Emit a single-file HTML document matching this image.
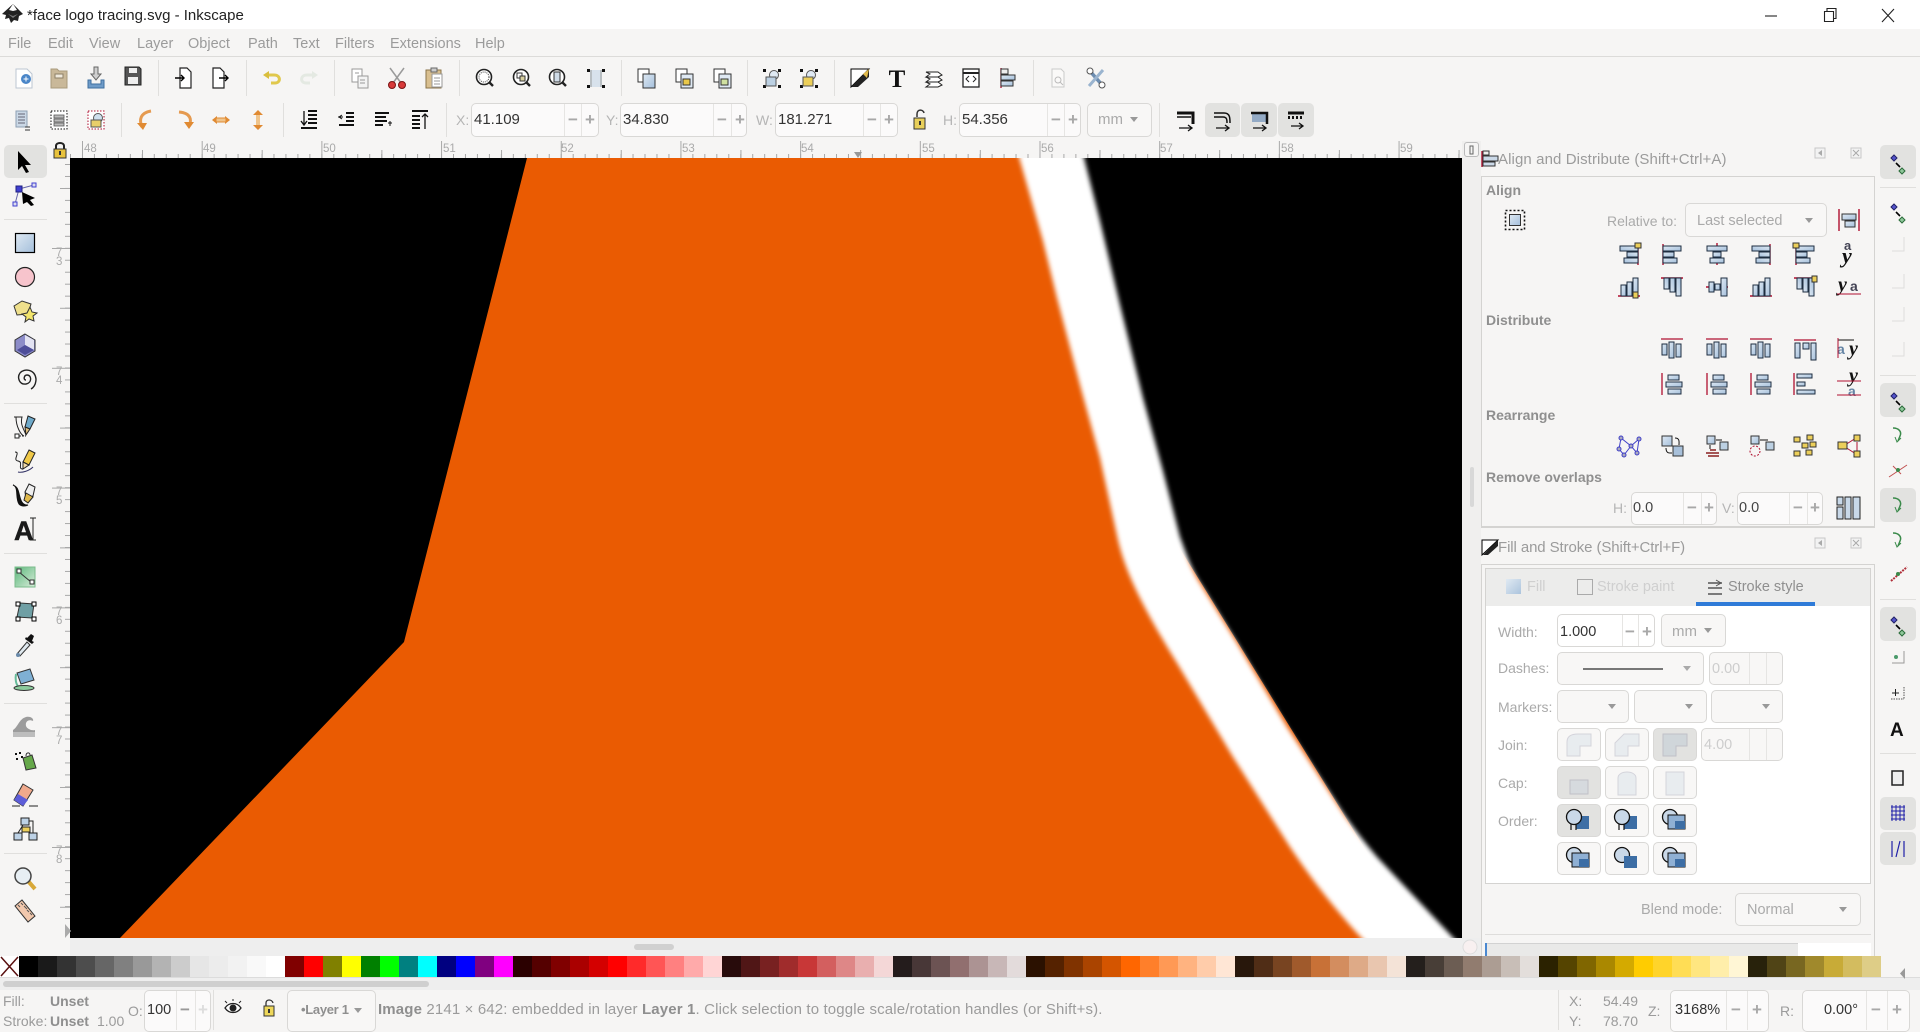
<!DOCTYPE html>
<html><head><meta charset="utf-8"><title>face logo tracing.svg - Inkscape</title>
<style>
html,body{margin:0;padding:0;width:1920px;height:1030px;overflow:hidden;background:#f6f5f4;font-family:"Liberation Sans",sans-serif;font-size:14px;color:#9b9b9b}
div,span.t{position:absolute}
.t{line-height:20px;height:20px;white-space:nowrap}
.b{font-weight:bold;color:#8f8f8f}
.d{color:#333;font-size:15px}
.m{font-size:14.5px;top:34px}
.pm{font-size:17px;font-weight:bold;color:#a8a8a8}
.rl{font-size:11.5px;color:#aaa;line-height:16px;top:141px}
.vl{font-size:11.5px;color:#aaa;line-height:9px;height:20px;white-space:normal;width:8px;left:56px}
.bx{background:#f8f7f6;border:1px solid #d9d8d6;border-radius:5px;box-sizing:border-box}
.on{background:#e2e2e0;border-radius:5px}
.sp{background:#fbfafa;border:1px solid #d9d8d6;border-radius:5px;box-sizing:border-box}
.v{width:1px;background:#e6e5e3}
.sep{background:#e0dfdd}
#pal{position:absolute;left:19px;top:956px;height:21px;width:1864px;display:flex;overflow:hidden}
#pal i{display:block;flex:0 0 19px;height:21px}
</style></head><body>

<div style="left:0;top:0;width:1920px;height:29px;background:#fff"></div>
<span class="t" style="left:27px;top:6px;font-size:15px;color:#222">*face logo tracing.svg - Inkscape</span>

<div style="left:0;top:56px;width:1920px;height:1px;background:#dcdbd9"></div>
<span class="t m" style="left:8px">File</span>
<span class="t m" style="left:48px">Edit</span>
<span class="t m" style="left:89px">View</span>
<span class="t m" style="left:137px">Layer</span>
<span class="t m" style="left:188px">Object</span>
<span class="t m" style="left:248px">Path</span>
<span class="t m" style="left:293px">Text</span>
<span class="t m" style="left:335px">Filters</span>
<span class="t m" style="left:390px">Extensions</span>
<span class="t m" style="left:475px">Help</span>

<!-- toolbar separators -->
<div class="sep" style="left:158px;top:60px;width:1px;height:36px"></div>
<div class="sep" style="left:246px;top:60px;width:1px;height:36px"></div>
<div class="sep" style="left:334px;top:60px;width:1px;height:36px"></div>
<div class="sep" style="left:459px;top:60px;width:1px;height:36px"></div>
<div class="sep" style="left:621px;top:60px;width:1px;height:36px"></div>
<div class="sep" style="left:747px;top:60px;width:1px;height:36px"></div>
<div class="sep" style="left:834px;top:60px;width:1px;height:36px"></div>
<div class="sep" style="left:1033px;top:60px;width:1px;height:36px"></div>
<div class="sep" style="left:121px;top:103px;width:1px;height:34px"></div>
<div class="sep" style="left:283px;top:103px;width:1px;height:34px"></div>
<div class="sep" style="left:446px;top:103px;width:1px;height:34px"></div>
<div class="sep" style="left:1159px;top:103px;width:1px;height:34px"></div>

<!-- toolbar 2 spins -->
<span class="t" style="left:456px;top:110px;font-size:14px;color:#b5b5b5">X:</span>
<div class="sp" style="left:471px;top:103px;width:128px;height:34px"></div>
<div class="v" style="left:564px;top:104px;height:32px"></div><div class="v" style="left:581px;top:104px;height:32px"></div>
<span class="t d" style="left:474px;top:110px">41.109</span>
<span class="t pm" style="left:568px;top:110px">−</span><span class="t pm" style="left:585px;top:110px">+</span>

<span class="t" style="left:606px;top:110px;color:#b5b5b5">Y:</span>
<div class="sp" style="left:620px;top:103px;width:127px;height:34px"></div>
<div class="v" style="left:713px;top:104px;height:32px"></div><div class="v" style="left:731px;top:104px;height:32px"></div>
<span class="t d" style="left:623px;top:110px">34.830</span>
<span class="t pm" style="left:717px;top:110px">−</span><span class="t pm" style="left:735px;top:110px">+</span>

<span class="t" style="left:756px;top:110px;color:#b5b5b5">W:</span>
<div class="sp" style="left:775px;top:103px;width:123px;height:34px"></div>
<div class="v" style="left:863px;top:104px;height:32px"></div><div class="v" style="left:880px;top:104px;height:32px"></div>
<span class="t d" style="left:778px;top:110px">181.271</span>
<span class="t pm" style="left:867px;top:110px">−</span><span class="t pm" style="left:884px;top:110px">+</span>

<span class="t" style="left:943px;top:110px;color:#b5b5b5">H:</span>
<div class="sp" style="left:959px;top:103px;width:122px;height:34px"></div>
<div class="v" style="left:1047px;top:104px;height:32px"></div><div class="v" style="left:1064px;top:104px;height:32px"></div>
<span class="t d" style="left:962px;top:110px">54.356</span>
<span class="t pm" style="left:1051px;top:110px">−</span><span class="t pm" style="left:1068px;top:110px">+</span>

<div class="bx" style="left:1087px;top:103px;width:65px;height:34px"></div>
<span class="t" style="left:1098px;top:110px;font-size:15px;color:#aaa">mm</span>

<div class="on" style="left:1205px;top:103px;width:35px;height:34px"></div>
<div class="on" style="left:1241px;top:103px;width:36px;height:34px"></div>
<div class="on" style="left:1278px;top:103px;width:36px;height:34px"></div>

<!-- top ruler -->
<div style="left:70px;top:141px;width:1392px;height:17px;background-image:linear-gradient(90deg,#a8a8a8 1px,transparent 1px),linear-gradient(90deg,#a8a8a8 1px,transparent 1px),linear-gradient(90deg,#a8a8a8 1px,transparent 1px);background-size:119.7px 17px,119.7px 8px,11.97px 4px;background-position:12px 0,72px 100%,0 100%;background-repeat:repeat-x"></div>
<span class="t rl" style="left:84px">48</span>
<span class="t rl" style="left:203px">49</span>
<span class="t rl" style="left:323px">50</span>
<span class="t rl" style="left:443px">51</span>
<span class="t rl" style="left:561px">52</span>
<span class="t rl" style="left:682px">53</span>
<span class="t rl" style="left:801px">54</span>
<span class="t rl" style="left:922px">55</span>
<span class="t rl" style="left:1041px">56</span>
<span class="t rl" style="left:1160px">57</span>
<span class="t rl" style="left:1281px">58</span>
<span class="t rl" style="left:1400px">59</span>

<!-- left ruler -->
<div style="left:52px;top:159px;width:18px;height:779px;background-image:linear-gradient(#a8a8a8 1px,transparent 1px),linear-gradient(#a8a8a8 1px,transparent 1px),linear-gradient(#a8a8a8 1px,transparent 1px);background-size:18px 119.8px,10px 119.8px,5px 11.98px;background-position:0 89px,100% 29px,100% 5px;background-repeat:repeat-y"></div>
<span class="t vl" style="top:249px">7<br>3</span>
<span class="t vl" style="top:368px">7<br>4</span>
<span class="t vl" style="top:488px">7<br>5</span>
<span class="t vl" style="top:608px">7<br>6</span>
<span class="t vl" style="top:728px">7<br>7</span>
<span class="t vl" style="top:847px">7<br>8</span>

<!-- left tool seps and active -->
<div class="on" style="left:4px;top:145px;width:43px;height:33px"></div>
<div class="sep" style="left:4px;top:219px;width:43px;height:1px"></div>
<div class="sep" style="left:4px;top:403px;width:43px;height:1px"></div>
<div class="sep" style="left:4px;top:553px;width:43px;height:1px"></div>
<div class="sep" style="left:4px;top:703px;width:43px;height:1px"></div>
<div class="sep" style="left:4px;top:853px;width:43px;height:1px"></div>

<!-- canvas -->
<svg style="position:absolute;left:70px;top:158px" width="1392" height="780" viewBox="70 158 1392 780">
<defs><filter id="bl" x="-5%" y="-5%" width="110%" height="110%"><feGaussianBlur stdDeviation="2.5"/></filter></defs>
<rect x="70" y="158" width="1392" height="780" fill="#000"/>
<path d="M527 158L404 642L120 938H1420L1150 500L1060 158Z" fill="#ea5b02"/>
<path d="M1017 150L1043 241L1057 298L1080 385L1100 458L1118 540C1124 565 1135 595 1177 663L1233 757L1290 847C1310 877 1335 910 1368 945H1460L1377 857C1365 843 1355 830 1343 813L1287 727L1237 643L1200 583C1190 567 1185 550 1180 537L1163 471L1143 398L1120 305L1100 221L1082 150Z" fill="#fff" filter="url(#bl)"/>
</svg>

<!-- bottom strip -->
<div style="left:70px;top:938px;width:1411px;height:18px;background:#eeeeee"></div>
<div style="left:634px;top:944px;width:40px;height:6px;background:#d0d0d0;border-radius:3px"></div>
<div style="left:0;top:977px;width:1920px;height:13px;background:#eeeeee;border-top:1px solid #dcdcdc;box-sizing:border-box"></div>
<div style="left:3px;top:981px;width:426px;height:6px;background:#cfcfcf;border-radius:3px"></div>

<!-- gutter right of canvas -->
<div style="left:1462px;top:141px;width:19px;height:797px;background:#f0efee"></div>
<div style="left:1470px;top:467px;width:4px;height:40px;background:#d8d8d8;border-radius:2px"></div>
<div style="left:1464px;top:142px;width:15px;height:15px;border:1px solid #bbb;border-radius:3px;box-sizing:border-box;background:#f6f5f4"></div>

<!-- Align panel -->
<span class="t" style="left:1498px;top:150px;font-size:15px;letter-spacing:.1px">Align and Distribute (Shift+Ctrl+A)</span>
<div style="left:1481px;top:176px;width:394px;height:352px;border:1px solid #d4d3d1;box-sizing:border-box;border-bottom-width:2px"></div>
<span class="t b" style="left:1486px;top:180px;font-size:14px">Align</span>
<span class="t b" style="left:1486px;top:310px;font-size:14px">Distribute</span>
<span class="t b" style="left:1486px;top:405px;font-size:14px">Rearrange</span>
<span class="t b" style="left:1486px;top:467px;font-size:14px">Remove overlaps</span>
<span class="t" style="left:1607px;top:211px;font-size:14px;color:#aaa">Relative to:</span>
<div class="bx" style="left:1685px;top:203px;width:142px;height:34px"></div>
<span class="t" style="left:1697px;top:211px;font-size:14.5px;color:#aaa">Last selected</span>

<span class="t" style="left:1613px;top:498px;color:#b5b5b5">H:</span>
<div class="sp" style="left:1631px;top:492px;width:86px;height:33px"></div>
<div class="v" style="left:1683px;top:493px;height:31px"></div><div class="v" style="left:1701px;top:493px;height:31px"></div>
<span class="t" style="left:1633px;top:498px;font-size:14.5px;color:#444">0.0</span>
<span class="t pm" style="left:1687px;top:498px">−</span><span class="t pm" style="left:1704px;top:498px">+</span>
<span class="t" style="left:1722px;top:498px;color:#b5b5b5">V:</span>
<div class="sp" style="left:1737px;top:492px;width:86px;height:33px"></div>
<div class="v" style="left:1789px;top:493px;height:31px"></div><div class="v" style="left:1807px;top:493px;height:31px"></div>
<span class="t" style="left:1739px;top:498px;font-size:14.5px;color:#444">0.0</span>
<span class="t pm" style="left:1793px;top:498px">−</span><span class="t pm" style="left:1810px;top:498px">+</span>

<!-- Fill & Stroke panel -->
<span class="t" style="left:1498px;top:538px;font-size:15px;letter-spacing:-.1px">Fill and Stroke (Shift+Ctrl+F)</span>
<div style="left:1481px;top:564px;width:394px;height:410px;border:1px solid #d4d3d1;border-bottom:0;box-sizing:border-box"></div>
<div style="left:1485px;top:568px;width:386px;height:316px;border:1px solid #d4d3d1;box-sizing:border-box;background:#fff"></div>
<div style="left:1486px;top:569px;width:384px;height:37px;background:#ececeb"></div>
<div style="left:1696px;top:602px;width:119px;height:4px;background:#2f7bd8"></div>
<span class="t" style="left:1527px;top:577px;font-size:14.5px;color:#cfcfcf">Fill</span>
<span class="t" style="left:1597px;top:577px;font-size:14.5px;color:#cfcfcf">Stroke paint</span>
<span class="t" style="left:1728px;top:577px;font-size:14.5px;color:#8f8f8f">Stroke style</span>

<span class="t" style="left:1498px;top:622px;color:#aaa">Width:</span>
<div class="sp" style="left:1557px;top:614px;width:98px;height:33px;background:#fff"></div>
<div class="v" style="left:1622px;top:615px;height:31px"></div><div class="v" style="left:1638px;top:615px;height:31px"></div>
<span class="t" style="left:1560px;top:622px;font-size:14.5px;color:#333">1.000</span>
<span class="t pm" style="left:1625px;top:622px">−</span><span class="t pm" style="left:1642px;top:622px">+</span>
<div class="bx" style="left:1661px;top:614px;width:65px;height:33px"></div>
<span class="t" style="left:1672px;top:622px;font-size:15px;color:#aaa">mm</span>

<span class="t" style="left:1498px;top:658px;color:#aaa">Dashes:</span>
<div class="bx" style="left:1557px;top:652px;width:147px;height:33px"></div>
<div style="left:1583px;top:668px;width:80px;height:2px;background:#777"></div>
<div class="bx" style="left:1709px;top:652px;width:74px;height:33px"></div>
<div class="v" style="left:1749px;top:653px;height:31px"></div><div class="v" style="left:1766px;top:653px;height:31px"></div>
<span class="t" style="left:1712px;top:659px;font-size:14.5px;color:#cdcdcd">0.00</span>

<span class="t" style="left:1498px;top:697px;color:#aaa">Markers:</span>
<div class="bx" style="left:1557px;top:690px;width:72px;height:33px"></div>
<div class="bx" style="left:1634px;top:690px;width:73px;height:33px"></div>
<div class="bx" style="left:1711px;top:690px;width:72px;height:33px"></div>

<span class="t" style="left:1498px;top:735px;color:#aaa">Join:</span>
<div class="bx" style="left:1557px;top:728px;width:44px;height:33px"></div>
<div class="bx" style="left:1605px;top:728px;width:44px;height:33px"></div>
<div class="bx" style="left:1653px;top:728px;width:44px;height:33px;background:#e2e2e0"></div>
<div class="bx" style="left:1701px;top:728px;width:82px;height:33px"></div>
<div class="v" style="left:1749px;top:729px;height:31px"></div><div class="v" style="left:1766px;top:729px;height:31px"></div>
<span class="t" style="left:1704px;top:735px;font-size:14.5px;color:#cdcdcd">4.00</span>

<span class="t" style="left:1498px;top:773px;color:#aaa">Cap:</span>
<div class="bx" style="left:1557px;top:766px;width:44px;height:33px;background:#e2e2e0"></div>
<div class="bx" style="left:1605px;top:766px;width:44px;height:33px"></div>
<div class="bx" style="left:1653px;top:766px;width:44px;height:33px"></div>

<span class="t" style="left:1498px;top:811px;color:#aaa">Order:</span>
<div class="bx" style="left:1557px;top:804px;width:44px;height:33px;background:#e2e2e0"></div>
<div class="bx" style="left:1605px;top:804px;width:44px;height:33px"></div>
<div class="bx" style="left:1653px;top:804px;width:44px;height:33px"></div>
<div class="bx" style="left:1557px;top:842px;width:44px;height:33px"></div>
<div class="bx" style="left:1605px;top:842px;width:44px;height:33px"></div>
<div class="bx" style="left:1653px;top:842px;width:44px;height:33px"></div>

<span class="t" style="left:1641px;top:900px;font-size:14.5px;color:#aaa">Blend mode:</span>
<div class="bx" style="left:1735px;top:893px;width:126px;height:33px"></div>
<span class="t" style="left:1747px;top:900px;font-size:14.5px;color:#aaa">Normal</span>
<div style="left:1485px;top:934px;width:386px;height:1px;background:#dedddb"></div>
<div style="left:1485px;top:943px;width:313px;height:13px;background:#e9e9e8;border-top:1px solid #d2d2d2;box-sizing:border-box"></div>
<div style="left:1485px;top:943px;width:2px;height:13px;background:#4a88d0"></div>
<div style="left:1798px;top:943px;width:73px;height:13px;background:#fff"></div>

<!-- palette -->
<div style="left:0;top:956px;width:19px;height:21px;background:#fff"></div>
<div id="pal"><i style="background:#000"></i><i style="background:#1a1a1a"></i><i style="background:#333"></i><i style="background:#4d4d4d"></i><i style="background:#666"></i><i style="background:#808080"></i><i style="background:#999"></i><i style="background:#b3b3b3"></i><i style="background:#ccc"></i><i style="background:#e6e6e6"></i><i style="background:#ececec"></i><i style="background:#f2f2f2"></i><i style="background:#f9f9f9"></i><i style="background:#fff"></i><i style="background:#800000"></i><i style="background:#f00"></i><i style="background:#808000"></i><i style="background:#ff0"></i><i style="background:#008000"></i><i style="background:#0f0"></i><i style="background:#008080"></i><i style="background:#0ff"></i><i style="background:#000080"></i><i style="background:#00f"></i><i style="background:#800080"></i><i style="background:#f0f"></i><i style="background:#2b0000"></i><i style="background:#500"></i><i style="background:#800000"></i><i style="background:#a00"></i><i style="background:#d40000"></i><i style="background:#f00"></i><i style="background:#ff2a2a"></i><i style="background:#f55"></i><i style="background:#ff8080"></i><i style="background:#faa"></i><i style="background:#ffd5d5"></i><i style="background:#280b0b"></i><i style="background:#501616"></i><i style="background:#782121"></i><i style="background:#a02c2c"></i><i style="background:#c83737"></i><i style="background:#d35f5f"></i><i style="background:#de8787"></i><i style="background:#e9afaf"></i><i style="background:#f4d7d7"></i><i style="background:#241c1c"></i><i style="background:#483737"></i><i style="background:#6c5353"></i><i style="background:#916f6f"></i><i style="background:#ac9393"></i><i style="background:#c8b7b7"></i><i style="background:#e3dbdb"></i><i style="background:#2b1100"></i><i style="background:#520"></i><i style="background:#803300"></i><i style="background:#a40"></i><i style="background:#d45500"></i><i style="background:#f60"></i><i style="background:#ff7f2a"></i><i style="background:#f95"></i><i style="background:#ffb380"></i><i style="background:#fca"></i><i style="background:#ffe6d5"></i><i style="background:#28170b"></i><i style="background:#502d16"></i><i style="background:#784421"></i><i style="background:#a05a2c"></i><i style="background:#c87137"></i><i style="background:#d38d5f"></i><i style="background:#deaa87"></i><i style="background:#e9c6af"></i><i style="background:#f4e3d7"></i><i style="background:#241f1c"></i><i style="background:#483e37"></i><i style="background:#6c5d53"></i><i style="background:#917c6f"></i><i style="background:#ac9d93"></i><i style="background:#c8beb7"></i><i style="background:#e3dedb"></i><i style="background:#2b2200"></i><i style="background:#540"></i><i style="background:#806600"></i><i style="background:#a80"></i><i style="background:#d4aa00"></i><i style="background:#fc0"></i><i style="background:#ffd42a"></i><i style="background:#fd5"></i><i style="background:#ffe680"></i><i style="background:#fea"></i><i style="background:#fff6d5"></i><i style="background:#28220b"></i><i style="background:#504416"></i><i style="background:#786721"></i><i style="background:#a0892c"></i><i style="background:#c8ab37"></i><i style="background:#d3bc5f"></i><i style="background:#decd87"></i></div>

<!-- status bar -->
<span class="t" style="left:3px;top:991px;font-size:14px">Fill:</span>
<span class="t b" style="left:50px;top:991px;font-size:14px">Unset</span>
<span class="t" style="left:3px;top:1011px;font-size:14px">Stroke:</span>
<span class="t b" style="left:50px;top:1011px;font-size:14px">Unset</span>
<span class="t" style="left:97px;top:1011px;font-size:14px">1.00</span>
<span class="t" style="left:128px;top:1001px;font-size:14px">O:</span>
<div class="sp" style="left:144px;top:990px;width:67px;height:42px"></div>
<div class="v" style="left:176px;top:991px;height:39px"></div><div class="v" style="left:195px;top:991px;height:39px"></div>
<span class="t" style="left:147px;top:1000px;font-size:14.5px;color:#333">100</span>
<span class="t pm" style="left:180px;top:1000px;color:#999">−</span><span class="t pm" style="left:198px;top:1000px;color:#ddd">+</span>
<div class="sep" style="left:213px;top:990px;width:1px;height:40px"></div>
<div class="bx" style="left:287px;top:990px;width:89px;height:42px"></div>
<span class="t b" style="left:301px;top:1000px;font-size:13px;letter-spacing:-.3px">•Layer 1</span>
<span class="t" style="left:378px;top:1000px;font-size:15px;letter-spacing:.14px"><b style="color:#8f8f8f">Image</b> 2141 × 642: embedded in layer <b style="color:#8f8f8f">Layer 1</b>. Click selection to toggle scale/rotation handles (or Shift+s).</span>
<div class="sep" style="left:1558px;top:990px;width:1px;height:40px"></div>
<span class="t" style="left:1569px;top:991px">X:</span><span class="t" style="left:1600px;top:991px;width:38px;text-align:right;font-size:14px">54.49</span>
<span class="t" style="left:1569px;top:1011px">Y:</span><span class="t" style="left:1600px;top:1011px;width:38px;text-align:right;font-size:14px">78.70</span>
<span class="t" style="left:1648px;top:1001px">Z:</span>
<div class="sp" style="left:1670px;top:990px;width:99px;height:42px"></div>
<div class="v" style="left:1726px;top:991px;height:39px"></div><div class="v" style="left:1747px;top:991px;height:39px"></div>
<span class="t" style="left:1675px;top:1000px;font-size:14.5px;color:#333">3168%</span>
<span class="t pm" style="left:1731px;top:1000px">−</span><span class="t pm" style="left:1752px;top:1000px">+</span>
<span class="t" style="left:1780px;top:1001px">R:</span>
<div class="sp" style="left:1802px;top:990px;width:108px;height:42px"></div>
<div class="v" style="left:1866px;top:991px;height:39px"></div><div class="v" style="left:1887px;top:991px;height:39px"></div>
<span class="t" style="left:1820px;top:1000px;width:38px;text-align:right;font-size:14.5px;color:#333">0.00°</span>
<span class="t pm" style="left:1871px;top:1000px">−</span><span class="t pm" style="left:1892px;top:1000px">+</span>

<!-- snap bar actives -->
<div class="on" style="left:1880px;top:145px;width:36px;height:34px"></div>
<div class="sep" style="left:1880px;top:187px;width:36px;height:1px"></div>
<div class="sep" style="left:1880px;top:375px;width:36px;height:1px"></div>
<div class="on" style="left:1880px;top:383px;width:36px;height:34px"></div>
<div class="on" style="left:1880px;top:488px;width:36px;height:34px"></div>
<div class="sep" style="left:1880px;top:599px;width:36px;height:1px"></div>
<div class="on" style="left:1880px;top:607px;width:36px;height:34px"></div>
<div class="sep" style="left:1880px;top:753px;width:36px;height:1px"></div>
<div class="on" style="left:1880px;top:797px;width:36px;height:33px"></div>
<div class="on" style="left:1880px;top:832px;width:36px;height:33px"></div>

<!-- icon overlay -->
<svg style="position:absolute;left:0;top:0" width="1920" height="1030" viewBox="0 0 1920 1030" fill="none">
<defs>
<linearGradient id="gb" x1="0" y1="0" x2="1" y2="1"><stop offset="0" stop-color="#dfe9f3"/><stop offset="1" stop-color="#a4bfdb"/></linearGradient>
<linearGradient id="gg" x1="0" y1="0" x2="1" y2="1"><stop offset="0" stop-color="#5cb87c"/><stop offset="1" stop-color="#d8ecd9"/></linearGradient>
<g id="mg"><circle cx="-1" cy="-1" r="7.5" fill="#fff" stroke="#222" stroke-width="1.6"/><path d="M4 4l4 4" stroke="#222" stroke-width="2.4"/></g>
<g id="arr"><path d="M-4-2h8l-4 5z" fill="#999"/></g>
<g id="arl"><path d="M-4-2h8l-4 5z" fill="#aaa"/></g>
<g id="hb"><path d="M-9-10V11" stroke="#b01030" stroke-width="1.4"/><rect x="-9" y="-8" width="18" height="5" fill="url(#gb)" stroke="#1d2d40"/><rect x="-9" y="-2" width="11" height="5" fill="url(#gb)" stroke="#1d2d40"/><rect x="-9" y="4" width="14" height="5" fill="url(#gb)" stroke="#1d2d40"/></g>
<g id="vb"><path d="M-11 9H11" stroke="#b01030" stroke-width="1.4"/><rect x="-8" y="-2" width="5" height="11" fill="url(#gb)" stroke="#1d2d40"/><rect x="-2" y="-5" width="5" height="14" fill="url(#gb)" stroke="#1d2d40"/><rect x="4" y="-9" width="5" height="18" fill="url(#gb)" stroke="#1d2d40"/></g>
<g id="dv"><path d="M-11-10H11" stroke="#b01030" stroke-width="1.3"/><rect x="-10" y="-5" width="5" height="11" fill="url(#gb)" stroke="#1d2d40"/><rect x="-3" y="-7" width="5" height="16" fill="url(#gb)" stroke="#1d2d40"/><rect x="4" y="-5" width="5" height="13" fill="url(#gb)" stroke="#1d2d40"/></g>
<g id="dh"><path d="M-10-11V11" stroke="#b01030" stroke-width="1.3"/><rect x="-4" y="-9" width="11" height="5" fill="url(#gb)" stroke="#1d2d40"/><rect x="-6" y="-2" width="16" height="5" fill="url(#gb)" stroke="#1d2d40"/><rect x="-4" y="5" width="13" height="5" fill="url(#gb)" stroke="#1d2d40"/></g>
<g id="sn"><path d="M-7-10l3-3 3 3-3 3z" fill="#5555cc" stroke="#222266"/><path d="M1 3l3-3 3 3-3 3z" fill="#8fc79a" stroke="#2a6b3a"/><path d="M-2-5l4 4" stroke="#000" stroke-width="1.6"/></g>
<g id="snp" opacity=".22"><path d="M6-8V6H-6" stroke="#888"/></g>
<g id="cv"><path d="M-5-7c6 0 9 4 7 8l-2 5" stroke="#3a8a4a" stroke-width="1.5"/><path d="M3 3l-4 4-2-5" stroke="#3a8a4a"/></g>
<g id="ord"><rect x="-2" y="-5" width="13" height="13" fill="#3d6ea5"/><circle cx="-4" cy="-4" r="7.5" fill="#c9d8e8" stroke="#111" stroke-width="1.3"/><path d="M-7 3v6M-2 3v6" stroke="#111" stroke-width="1.2"/></g>
<g id="ord2"><circle cx="-4" cy="-4" r="7.5" fill="#c9d8e8" stroke="#111" stroke-width="1.3"/><rect x="-6" y="-6" width="17" height="14" fill="#8fb0d4" stroke="#111"/><rect x="1" y="0" width="10" height="8" fill="#3d6ea5"/></g>
</defs>

<!-- title logo -->
<path d="M13 4L2 14l4 1-1 4 4-1 2 5 3-3 4 1 1-5 4-2z" fill="#222"/><path d="M13 4l-4 6 4 1 4-1z" fill="#fff"/><path d="M8 14l5 4 5-4-5 2z" fill="#777"/>
<!-- window controls -->
<path d="M1765 16h12" stroke="#222" stroke-width="1.1"/>
<path d="M1824.500 11.500h9v10h-9z" stroke="#222" stroke-width="1.1" fill="#fff"/><path d="M1827 11.500v-3h9v10h-2.500" stroke="#222" stroke-width="1.1"/>
<path d="M1882 9l12 13M1894 9l-12 13" stroke="#222" stroke-width="1.1"/>

<!-- toolbar 1 -->
<g transform="translate(24,78)"><path d="M-8-9H3l5 5V10H-8z" fill="#fff" stroke="#bcc6d2"/><circle cx="2" cy="1" r="5" fill="#4a86c8"/><path d="M-.5 1h5M2-1.500v5" stroke="#fff"/></g>
<g transform="translate(59,78)"><path d="M-8-9h6l2 2H8V10H-8z" fill="#c9b899" stroke="#a99a7c"/><rect x="-4" y="-4" width="8" height="4" fill="#efe9dc" stroke="#8d8066"/></g>
<g transform="translate(96,78)"><path d="M-8 2h3v4H5V2h3v8H-8z" fill="#6e9bc8" stroke="#3f6f9f"/><path d="M-2-11h4v7h3l-5 6-5-6h3z" fill="#cfcfcf" stroke="#666"/></g>
<g transform="translate(133,76)"><path d="M-8-9H6l2 2V9H-8z" fill="#555" stroke="#222"/><rect x="-4" y="-8" width="8" height="5" fill="#eee"/><rect x="-5" y="1" width="10" height="7" fill="#eee"/></g>
<g transform="translate(184,78)"><path d="M-4-10H3l4 4V10H-4z" fill="#fff" stroke="#222" stroke-width="1.2"/><path d="M-9 0H0M-3-3l3 3-3 3" stroke="#000" stroke-width="1.4"/></g>
<g transform="translate(220,78)"><path d="M-7-10H0l4 4V10H-7z" fill="#fff" stroke="#222" stroke-width="1.2"/><path d="M-1 0H8M5-3l3 3-3 3" stroke="#000" stroke-width="1.4"/></g>
<g transform="translate(272,78)"><path d="M-6-3H2c7 0 7 8 1 8H-1" stroke="#e0c84c" stroke-width="3"/><path d="M-9-3l6-4V1z" fill="#d9be3c"/></g>
<g transform="translate(309,78)" opacity=".3"><path d="M6-3H-2c-7 0-7 8-1 8H1" stroke="#bcd0bc" stroke-width="3"/><path d="M9-3L3-7V1z" fill="#bcd0bc"/></g>
<g transform="translate(360,78)"><path d="M-8-9H2V4H-8z" fill="#fff" stroke="#999"/><path d="M-2-2H8V10H-2z" fill="#f3f3f3" stroke="#999"/><path d="M-5-5h4M0 2h5M0 5h5" stroke="#999"/></g>
<g transform="translate(397,78)"><path d="M-7-10L4 5M7-10L-4 5" stroke="#9a9a9a" stroke-width="1.500"/><circle cx="-5" cy="7" r="3.500" fill="#d83a3a" stroke="#7a1414"/><circle cx="5" cy="7" r="3.500" fill="#d83a3a" stroke="#7a1414"/></g>
<g transform="translate(434,78)"><rect x="-8" y="-8" width="15" height="18" fill="#d9bf8f" stroke="#8a744a"/><rect x="-3" y="-10" width="6" height="4" fill="#ccc" stroke="#666"/><rect x="-2" y="-4" width="10" height="13" fill="#fff" stroke="#999"/><path d="M0 0h6M0 3h6M0 6h6" stroke="#999"/></g>
<g transform="translate(485,78)"><use href="#mg"/><circle cx="-1" cy="-1" r="5" stroke="#444" stroke-dasharray="1 1"/></g>
<g transform="translate(522,78)"><use href="#mg"/><rect x="-5" y="-5" width="5" height="5" stroke="#333"/><rect x="-2" y="-2" width="5" height="5" stroke="#333" fill="#d8d0a0"/></g>
<g transform="translate(558,78)"><use href="#mg"/><rect x="-4" y="-6" width="6" height="10" fill="#cfdbe7" stroke="#333"/></g>
<g transform="translate(596,78)"><rect x="-6" y="-8" width="12" height="17" fill="#d8e2ec"/><path d="M-9-9h3v3h-3zM6-9h3v3H6zM-9 7h3v3h-3zM6 7h3v3H6z" fill="#111"/><path d="M-5-8v17M5-8v17" stroke="#999"/></g>
<g transform="translate(646,78)"><rect x="-8" y="-9" width="11" height="13" fill="#fff" stroke="#333"/><rect x="-3" y="-4" width="12" height="14" fill="url(#gb)" stroke="#333"/></g>
<g transform="translate(684,78)"><rect x="-8" y="-9" width="11" height="13" fill="#fff" stroke="#333"/><rect x="-3" y="-4" width="12" height="14" fill="#dfe9f3" stroke="#333"/><rect x="-1" y="1" width="7" height="6" fill="#eac84a" stroke="#333"/></g>
<g transform="translate(722,78)"><rect x="-8" y="-9" width="11" height="13" fill="#fff" stroke="#333"/><rect x="-3" y="-4" width="12" height="14" fill="#dfe9f3" stroke="#333"/><rect x="-1" y="1" width="7" height="6" fill="#cfe0a0" stroke="#333"/></g>
<g transform="translate(772,78)"><path d="M-9-9h3v3h-3zM6-9h3v3H6zM-9 7h3v3h-3zM6 7h3v3H6z" fill="#111"/><circle cx="2" cy="-3" r="4.500" fill="#dfe9f3" stroke="#555"/><rect x="-6" y="-1" width="10" height="9" fill="#bcd0e2" stroke="#555"/></g>
<g transform="translate(809,78)"><path d="M-9-9h3v3h-3zM6-9h3v3H6zM-9 7h3v3h-3zM6 7h3v3H6z" fill="#111"/><circle cx="2" cy="-3" r="4.500" fill="#dfe9f3" stroke="#555"/><rect x="-6" y="-1" width="10" height="9" fill="#eccf5a" stroke="#555"/></g>
<g transform="translate(860,78)"><path d="M-9-9H9L-9 9z" fill="#fff" stroke="#000"/><path d="M-8 8L9-9V-1L-2 9H-8z" fill="#222"/><path d="M3-4L9-9 7 0z" fill="#e0b94a"/></g>
<text x="897" y="87" text-anchor="middle" font-family="Liberation Serif,serif" font-weight="bold" font-size="25" fill="#111">T</text>
<g transform="translate(934,78)"><path d="M-8-6h12l4 3-4 2H-8l4-3z" fill="#fff" stroke="#222"/><path d="M-8-1h12l4 3-4 2H-8l4-3z" fill="#fff" stroke="#222"/><path d="M-8 4h12l4 3-4 2H-8l4-3z" fill="#fff" stroke="#222"/></g>
<g transform="translate(971,78)"><rect x="-8" y="-9" width="16" height="18" fill="#fff" stroke="#222" stroke-width="1.3"/><path d="M-8-5H8" stroke="#222" stroke-width="2"/><path d="M-2-2l-3 3 3 3M2-2l3 3-3 3" stroke="#222"/></g>
<g transform="translate(1008,78)"><path d="M-7-10V10" stroke="#b01030" stroke-width="1.300"/><rect x="-7" y="-9" width="7" height="5" fill="#eee" stroke="#333"/><rect x="-7" y="-3" width="14" height="5" fill="url(#gb)" stroke="#333"/><rect x="-7" y="3" width="12" height="5" fill="url(#gb)" stroke="#333"/></g>
<g transform="translate(1058,78)" opacity=".45"><path d="M-6-9H3l3 3V9H-6z" fill="#fff" stroke="#999"/><circle cx="0" cy="2" r="3" stroke="#777"/><path d="M2 4l3 3" stroke="#777"/></g>
<g transform="translate(1096,78)"><path d="M-7-8L7 8" stroke="#6d8db0" stroke-width="3.500"/><path d="M7-8L-7 8" stroke="#9ab4cf" stroke-width="3"/><circle cx="-6" cy="-7" r="3" fill="#fff" stroke="#555"/><circle cx="6" cy="7" r="3" fill="#fff" stroke="#555"/></g>

<!-- toolbar 2 -->
<g transform="translate(22,120)"><path d="M-6-9H5V7H-6z" fill="#cbd8e6" stroke="#8ea0b3"/><path d="M-4-6h7M-4-3h7M-4 0h7M-4 3h7" stroke="#667"/><path d="M3 7h5M3 10h5" stroke="#333"/></g>
<g transform="translate(59,120)"><rect x="-8" y="-9" width="16" height="18" fill="#fff" stroke="#111" stroke-dasharray="1.500 1.500"/><path d="M-5-5h10v3H-5zM-5-1h10v3H-5zM-5 3h10v3H-5z" fill="#bbb" stroke="#555" stroke-width=".8"/></g>
<g transform="translate(96,120)"><rect x="-8" y="-9" width="16" height="18" fill="#fff" stroke="#b01030" stroke-dasharray="1.500 1.500"/><circle cx="2" cy="-2" r="4.500" fill="#cfe0ee" stroke="#555"/><rect x="-5" y="0" width="10" height="7" fill="#e8cf6a" stroke="#555"/></g>
<g transform="translate(146,120)"><path d="M5-9C-6-7-7 0-4 7" stroke="#e59a50" stroke-width="3"/><path d="M-9 3H1L-3 10z" fill="#e08a32"/></g>
<g transform="translate(185,120)"><path d="M-6-8C6-7 7 0 4 6" stroke="#e59a50" stroke-width="3"/><path d="M9 2H-1L4 9z" fill="#e08a32"/></g>
<g transform="translate(221,120)"><path d="M-9 0l5-4v8zM9 0L4-4v8z" fill="#e08a32"/><path d="M-5-2h10v4H-5z" fill="#f0c48a" stroke="#e08a32"/></g>
<g transform="translate(258,120)"><path d="M0-10l-5 5h10zM0 10l-5-5h10z" fill="#e08a32"/><rect x="-2" y="-5" width="4" height="10" fill="#f0c48a"/></g>
<g transform="translate(309,120)"><path d="M-1-9H8M-1-5H8M-1-1H8M-1 3H8" stroke="#111" stroke-width="2"/><path d="M-8 8H8" stroke="#111" stroke-width="2"/><path d="M-5-9V4M-8 1l3 4 3-4" stroke="#111" stroke-width="1.300"/></g>
<g transform="translate(346,120)"><path d="M0-7H8M0-3H8M0 1H8M-7 5H8" stroke="#111" stroke-width="2"/><path d="M-8-3h5M-4-5l-3 2 3 2" stroke="#111"/></g>
<g transform="translate(383,120)"><path d="M-8-7H6M-8-3H3M-8 1H4M-8 5H0" stroke="#111" stroke-width="2"/><path d="M5 3h4M7 1v5" stroke="#111"/></g>
<g transform="translate(420,120)"><path d="M-8-9H8" stroke="#111" stroke-width="2"/><path d="M-8-4H0M-8 0H0M-8 4H0M-8 8H0" stroke="#111" stroke-width="2"/><path d="M5-5V9M2-3l3-3 3 3" stroke="#111" stroke-width="1.300"/></g>
<g transform="translate(920,120)"><path d="M-3-3v-3c0-5 6-5 7-1" stroke="#333" stroke-width="1.500"/><rect x="-6" y="-2" width="11" height="11" fill="#e8cf5a" stroke="#333"/><rect x="-1" y="1" width="2" height="4" fill="#333"/></g>
<use href="#arr" x="1134" y="119"/>
<g transform="translate(1185,120)" stroke="#111"><path d="M-8-7H8V4" stroke-width="3"/><path d="M-8-3H6" stroke-width="1.500"/><path d="M-6 8H6M3 5l4 3-4 3" stroke-width="1.300"/></g>
<g transform="translate(1222,120)" stroke="#111"><path d="M-8-7H2C8-7 8-2 8 3" stroke-width="1.500"/><path d="M-8-3H1C5-3 5 0 5 3" stroke-width="1.500"/><path d="M-6 8H6M3 5l4 3-4 3" stroke-width="1.300"/></g>
<g transform="translate(1259,120)" stroke="#111"><rect x="-7" y="-6" width="14" height="8" fill="#93aac5" stroke="none"/><path d="M-8-7H8V4" stroke-width="2.500"/><path d="M-6 8H6M3 5l4 3-4 3" stroke-width="1.300"/></g>
<g transform="translate(1296,120)"><path d="M-8-7H8" stroke="#111" stroke-width="3"/><path d="M-7-4v3M-3-4v3M1-4v3M5-4v3" stroke="#111" stroke-width="2"/><path d="M-5 6H6M3 3l4 3-4 3" stroke="#111" stroke-width="1.300"/></g>

<!-- ruler lock, corner -->
<g transform="translate(60,151)"><path d="M-4-2V-5C-4-9 4-9 4-5v3" stroke="#222" stroke-width="2"/><rect x="-6" y="-2" width="12" height="9" fill="#e8c23c" stroke="#333"/><rect x="-1" y="0" width="2" height="4" fill="#333"/></g>
<path d="M858 158l-4-6h8z" fill="#999"/>
<path d="M1470 146h3v8h-3z" stroke="#666"/>
<path d="M65 924v14l6-7z" fill="#aaa"/>

<!-- left tools -->
<g transform="translate(24,162)"><path d="M-6-11V8L-2 4 2 11 5 10 1 3H7z" fill="#000"/></g>
<g transform="translate(24,195)"><path d="M-5-6L10-10M-5-6L-9 9" stroke="#66a"/><rect x="-8" y="-9" width="6" height="6" fill="#4040d0" stroke="#202080"/><rect x="8" y="-12" width="4" height="4" fill="#dde" stroke="#4040d0"/><rect x="-11" y="7" width="4" height="4" fill="#dde" stroke="#4040d0"/><path d="M-2-3L11 3 6 5 10 10 7 11 3 7-1 9z" fill="#000"/></g>
<rect x="15.500" y="233.500" width="19" height="19" fill="url(#gb)" stroke="#000" stroke-width="1.200"/>
<circle cx="25" cy="277" r="9.500" fill="#f7c4cc" stroke="#222" stroke-width="1.200"/>
<g transform="translate(25,311)"><path d="M-11-5L-3-10 6-7 3 3-8 4z" fill="#efe08c" stroke="#333"/><path d="M5-4l2 5 5 1-4 3 1 5-5-2-4 3 1-5-4-3 5-1z" fill="#f2e56c" stroke="#333"/></g>
<g transform="translate(25,345)"><path d="M0-11L10-5V6L0 12-10 6V-5z" fill="#8c8cc8" stroke="#333"/><path d="M0-10L9-5V5L0 0z" fill="#e3e3f2"/><path d="M-8 5L0 0 9 5 0 10z" fill="#4d4d99"/></g>
<g transform="translate(25,379)"><path d="M1 1C-2 1-1-4 2-4 7-4 7 4 1 5-6 6-8-2-5-6-1-11 10-10 11 0 11 6 8 9 6 10" stroke="#222" stroke-width="1.400"/></g>
<g transform="translate(24,427)"><path d="M-10-10H-2C-4-2 0 2 2 8M-8-10C-8 0-3 8 0 9" stroke="#222"/><rect x="-9" y="7" width="4" height="4" fill="#fff" stroke="#222"/><path d="M-5 9H2" stroke="#222" stroke-dasharray="2 1"/><path d="M4-11l7 3L6 2 1 0z" fill="#6fa9c9" stroke="#222"/><path d="M1 0l5 2-4 6z" fill="#e0c080" stroke="#222"/></g>
<g transform="translate(24,461)"><path d="M-9-9C-3-9-12-1-6 0S-7 8-1 8" stroke="#222"/><path d="M5-11l6 3L5 4-1 1z" fill="#f0c948" stroke="#222"/><path d="M-1 1l6 3-6 4z" fill="#f2dba8" stroke="#222"/><path d="M-6 11C-2 12 5 10 9 6" stroke="#336"/></g>
<g transform="translate(24,495)"><path d="M-11-10C-5-8-9 3-5 9-2 12 2 11 4 10-4 11-4 0-6-5-7-8-9-9-11-10z" fill="#111" stroke="#111"/><path d="M5-11l6 3-2 9-7 3-1-7z" fill="#eee" stroke="#222"/><path d="M2-2L9 2 4 8 0 5z" fill="#e0b94a" stroke="#222"/></g>
<text x="14" y="540" font-family="Liberation Sans,sans-serif" font-weight="bold" font-size="27" fill="#1a1a1a" stroke="#1a1a1a" stroke-width=".5">A</text><path d="M33 518v22M30 518h6M30 540h6" stroke="#222"/>
<g transform="translate(25,577)"><rect x="-10" y="-10" width="20" height="20" fill="url(#gg)" stroke="#7bbb8b"/><path d="M-6-5L6 5" stroke="#333"/><rect x="-8" y="-8" width="4" height="4" fill="#fff" stroke="#333"/><rect x="5" y="3" width="4" height="4" fill="#fff" stroke="#333"/></g>
<g transform="translate(25,611)"><path d="M-5-8L9-7 7 7-8 6z" fill="#6f9fa4" stroke="#333"/><rect x="-9" y="-9" width="4" height="4" fill="#fff" stroke="#000"/><rect x="7" y="-9" width="4" height="4" fill="#fff" stroke="#000"/><rect x="-9" y="6" width="4" height="4" fill="#fff" stroke="#000"/><rect x="7" y="6" width="4" height="4" fill="#fff" stroke="#000"/></g>
<g transform="translate(24,645)"><path d="M-7 9L3-3l3 3L-4 11z" fill="#dfe8ee" stroke="#333"/><path d="M3-7l4-4 3 2-2 5 2 1-2 2-7-5 1-2z" fill="#111"/><circle cx="-6" cy="10" r="2" fill="#6a8aaa"/></g>
<g transform="translate(24,679)"><path d="M-7-6L6-10 10 1-3 5z" fill="#7fb0d4" stroke="#333"/><path d="M-8-5C-9 0-8 5-6 7" stroke="#6b9" stroke-width="2"/><ellipse cx="0" cy="9" rx="10" ry="2.500" fill="#8ccb9d" stroke="#333"/></g>
<g transform="translate(24,727)"><path d="M-11 10V3C-6 0-5-8 2-10 7-11 10-8 9-6 5-8 1-6 2-1 3 2 8 4 11 3V10z" fill="#9c9c9c"/><path d="M-11 10H11V5H-11z" fill="#bdbdbd"/></g>
<g transform="translate(24,761)"><path d="M-1-3L8-6l4 13-10 2z" fill="#66a84a" stroke="#333"/><path d="M2-5c0-4 4-4 4-1" stroke="#333"/><path d="M-9-8h2v2h-2zM-5-9h2v2h-2zM-8-3h2v2h-2zM-3-5h2v2h-2z" fill="#111"/></g>
<g transform="translate(25,795)"><path d="M-2-11L8-5-2 11-11 5z" fill="#f0a98c" stroke="#333"/><path d="M-7-1L3 5-2 11-11 5z" fill="#5d5dd8"/><path d="M-13 11h8M4 11h9" stroke="#222"/></g>
<g transform="translate(25,829)"><rect x="-4" y="-11" width="8" height="7" fill="#bdd2e6" stroke="#222"/><rect x="-11" y="4" width="8" height="7" fill="#bdd2e6" stroke="#222"/><rect x="4" y="4" width="8" height="7" fill="#bdd2e6" stroke="#222"/><rect x="-3" y="-2" width="8" height="5" fill="#eccf5a" stroke="#222"/><path d="M-2-4L-7 4M4-8H8V4" stroke="#222"/></g>
<g transform="translate(23,876)"><path d="M5 5l7 8" stroke="#d8a838" stroke-width="4"/><circle cx="0" cy="0" r="8" fill="#e7eef3" stroke="#444" stroke-width="1.500"/></g>
<g transform="translate(25,911)"><path d="M-10-5L-3-11 10 5 3 11z" fill="#f2c8ad" stroke="#333"/><path d="M-7-6l2 2M-4-8l2 2M-1-5l3 3M2-1l2 2M5 2l2 2" stroke="#555"/></g>

<!-- right snap bar -->
<use href="#sn" x="1898" y="168"/>
<use href="#sn" x="1898" y="217"/>
<use href="#snp" x="1898" y="245"/><use href="#snp" x="1898" y="282"/><use href="#snp" x="1898" y="315"/><use href="#snp" x="1898" y="350"/>
<use href="#sn" x="1898" y="406"/>
<use href="#cv" x="1898" y="435"/>
<path d="M1889 477l18-12M1893 466l8 8" stroke="#c05050" stroke-width="1"/><circle cx="1898" cy="470" r="2" fill="#3a8a4a"/>
<use href="#cv" x="1898" y="505"/>
<use href="#cv" x="1898" y="540"/>
<path d="M1891 581l16-14" stroke="#b0303a" stroke-width="2" stroke-dasharray="2 1"/><circle cx="1898" cy="574" r="2" fill="#3a8a4a"/>
<use href="#sn" x="1898" y="630"/>
<path d="M1904 651v12h-12" stroke="#999"/><circle cx="1896" cy="657" r="2" fill="#4a9a6a"/>
<path d="M1891 699h13M1904 687v12" stroke="#555" stroke-dasharray="1.500 1"/><path d="M1892 693h7M1895.500 689v7" stroke="#222"/>
<text x="1890" y="736" font-family="Liberation Sans,sans-serif" font-weight="bold" font-size="19" fill="#111">A</text>
<rect x="1892" y="771" width="11" height="14" fill="#eee" stroke="#222" stroke-width="1.500"/>
<path d="M1891 807h14M1891 811h14M1891 815h14M1891 819h14M1892 805v16M1896 805v16M1900 805v16M1904 805v16" stroke="#2020a8"/>
<path d="M1892 841v16M1904 841v16M1896 857l4-16" stroke="#2020a8" stroke-width="1.200"/>

<!-- panel header icons -->
<g transform="translate(1490,159)"><path d="M-8-8V8" stroke="#b01030" stroke-width="1.400"/><rect x="-7" y="-8" width="6" height="4" stroke="#333" fill="#eee"/><rect x="-7" y="-3" width="15" height="5" stroke="#333" fill="#cbd9e8"/><rect x="-7" y="3" width="12" height="4" stroke="#333" fill="#cbd9e8"/></g>
<g transform="translate(1490,547)"><path d="M-8-7H8L-8 8z" fill="#fff" stroke="#000"/><path d="M-7 8L8-7V-1L-2 8z" fill="#222"/></g>
<rect x="1815" y="148" width="10" height="10" stroke="#c8c8c8" fill="#f2f2f2"/><path d="M1822 150v6l-4-3z" fill="#aaa"/>
<rect x="1851" y="148" width="10" height="10" stroke="#c8c8c8" fill="#f2f2f2"/><path d="M1853 150l6 6M1859 150l-6 6" stroke="#aaa"/>
<rect x="1815" y="538" width="10" height="10" stroke="#c8c8c8" fill="#f2f2f2"/><path d="M1822 540v6l-4-3z" fill="#aaa"/>
<rect x="1851" y="538" width="10" height="10" stroke="#c8c8c8" fill="#f2f2f2"/><path d="M1853 540l6 6M1859 540l-6 6" stroke="#aaa"/>

<!-- align icons -->
<rect x="1505.500" y="210.500" width="19" height="19" stroke="#111" stroke-width="1.600" stroke-dasharray="2 2"/><rect x="1509.500" y="214.500" width="11" height="11" fill="url(#gb)" stroke="#333"/>
<use href="#arr" x="1809" y="220"/>
<g transform="translate(1849,220)"><path d="M-10-11V11M10-11V11" stroke="#b01030" stroke-width="1.400"/><rect x="-7" y="-6" width="14" height="6" fill="url(#gb)" stroke="#333"/><rect x="-4" y="1" width="10" height="6" fill="url(#gb)" stroke="#333"/></g>

<g transform="translate(1629,254) scale(-1,1)"><use href="#hb"/><rect x="-12" y="-11" width="6" height="5" fill="#eccf5a" stroke="#333"/></g>
<use href="#hb" x="1672" y="254"/>
<g transform="translate(1717,254)"><path d="M0-11V11" stroke="#b01030" stroke-width="1.400"/><rect x="-10" y="-8" width="20" height="5" fill="url(#gb)" stroke="#1d2d40"/><rect x="-4" y="-2" width="8" height="5" fill="url(#gb)" stroke="#1d2d40"/><rect x="-7" y="4" width="14" height="5" fill="url(#gb)" stroke="#1d2d40"/></g>
<g transform="translate(1761,254) scale(-1,1)"><use href="#hb"/></g>
<g transform="translate(1805,254)"><use href="#hb"/><rect x="-12" y="-11" width="6" height="5" fill="#eccf5a" stroke="#333"/></g>
<text x="1844" y="250" font-family="Liberation Sans,sans-serif" font-weight="bold" font-size="13" fill="#445">a</text><text x="1842" y="263" font-family="Liberation Serif,serif" font-weight="bold" font-style="italic" font-size="22" fill="#111">y</text>

<use href="#vb" x="1629" y="287"/><rect x="1633" y="292" width="5" height="6" fill="#eccf5a" stroke="#333"/>
<g transform="translate(1672,287) scale(1,-1)"><use href="#vb"/></g>
<g transform="translate(1717,287)"><path d="M-11 0H11" stroke="#b01030" stroke-width="1.400"/><rect x="-8" y="-5" width="5" height="10" fill="url(#gb)" stroke="#1d2d40"/><rect x="-2" y="-3" width="5" height="6" fill="url(#gb)" stroke="#1d2d40"/><rect x="4" y="-9" width="6" height="18" fill="url(#gb)" stroke="#1d2d40"/></g>
<use href="#vb" x="1761" y="287"/>
<g transform="translate(1805,287) scale(1,-1)"><use href="#vb"/></g><rect x="1812" y="276" width="5" height="6" fill="#eccf5a" stroke="#333"/>
<text x="1838" y="291" font-family="Liberation Serif,serif" font-weight="bold" font-style="italic" font-size="20" fill="#111">y</text><text x="1850" y="291" font-family="Liberation Sans,sans-serif" font-weight="bold" font-size="14" fill="#445">a</text><path d="M1837 294h24" stroke="#b01030"/>

<use href="#dv" x="1672" y="349"/><use href="#dv" x="1717" y="349"/><use href="#dv" x="1761" y="349"/>
<g transform="translate(1805,349)"><path d="M-11-9H11" stroke="#b01030" stroke-width="1.300"/><rect x="-10" y="-6" width="5" height="15" fill="url(#gb)" stroke="#1d2d40"/><rect x="-2" y="-6" width="6" height="6" fill="url(#gb)" stroke="#1d2d40"/><rect x="6" y="-6" width="5" height="17" fill="url(#gb)" stroke="#1d2d40"/></g>
<text x="1837" y="354" font-family="Liberation Sans,sans-serif" font-weight="bold" font-size="14" fill="#6484a4">a</text><text x="1849" y="355" font-family="Liberation Serif,serif" font-weight="bold" font-style="italic" font-size="20" fill="#111">y</text><path d="M1838 340h16" stroke="#111"/><path d="M1838 338v20" stroke="#b01030"/>

<use href="#dh" x="1672" y="384"/><use href="#dh" x="1717" y="384"/><use href="#dh" x="1761" y="384"/>
<g transform="translate(1805,384)"><path d="M-11-11V11" stroke="#b01030" stroke-width="1.300"/><rect x="-8" y="-10" width="15" height="4" fill="url(#gb)" stroke="#1d2d40"/><rect x="-8" y="-2" width="8" height="4" fill="url(#gb)" stroke="#1d2d40"/><rect x="-8" y="6" width="18" height="4" fill="url(#gb)" stroke="#1d2d40"/></g>
<text x="1849" y="382" font-family="Liberation Serif,serif" font-weight="bold" font-style="italic" font-size="20" fill="#111">y</text><text x="1848" y="396" font-family="Liberation Sans,sans-serif" font-weight="bold" font-size="14" fill="#6484a4">a</text><path d="M1837 381h24M1837 395h24" stroke="#b01030"/>

<g transform="translate(1629,446)" stroke="#4040c8"><path d="M-8-8L-10 3-5 9 2 0 8 7 10-7 2 0-8-8" stroke-width="1"/><circle cx="-8" cy="-8" r="2" fill="#aab"/><circle cx="10" cy="-7" r="2" fill="#aab"/><circle cx="-10" cy="3" r="2" fill="#aab"/><circle cx="-5" cy="9" r="2" fill="#aab"/><circle cx="8" cy="7" r="2" fill="#aab"/><circle cx="2" cy="0" r="2" fill="#aab"/></g>
<g transform="translate(1672,446)"><rect x="-10" y="-10" width="10" height="10" fill="url(#gb)" stroke="#333"/><rect x="1" y="0" width="10" height="10" fill="#a8c0da" stroke="#333"/><path d="M3-8C8-8 7-4 7-1M-6 2C-6 8-2 7 0 7" stroke="#111"/></g>
<g transform="translate(1717,446)"><rect x="-10" y="-10" width="8" height="8" fill="url(#gb)" stroke="#333"/><rect x="3" y="-4" width="8" height="8" fill="#bcd0e2" stroke="#333"/><path d="M-1-6H5M-7-1V3" stroke="#111"/><path d="M-11 7H2M-9 10H2M-7 4h6" stroke="#8a2020" stroke-width="1.500"/></g>
<g transform="translate(1761,446)"><rect x="-10" y="-10" width="8" height="8" fill="url(#gb)" stroke="#333"/><rect x="5" y="-4" width="8" height="8" fill="#bcd0e2" stroke="#333"/><path d="M-1-6H7" stroke="#111"/><circle cx="-6" cy="5" r="5" stroke="#b01030" stroke-dasharray="2 1.500"/></g>
<g transform="translate(1805,446)" fill="#eccf5a" stroke="#333"><rect x="-11" y="-9" width="6" height="5"/><rect x="2" y="-11" width="6" height="5"/><rect x="-3" y="-3" width="6" height="5"/><rect x="5" y="-4" width="6" height="5"/><rect x="-11" y="5" width="6" height="5"/><rect x="1" y="4" width="6" height="5"/></g>
<g transform="translate(1849,446)"><path d="M-4-1L7-8M-4 1L7 8M8-4V5" stroke="#b01030"/><rect x="-11" y="-4" width="9" height="7" fill="#eccf5a" stroke="#333"/><rect x="5" y="-11" width="6" height="6" fill="#eccf5a" stroke="#333"/><rect x="5" y="5" width="6" height="6" fill="#eccf5a" stroke="#333"/></g>
<g transform="translate(1849,508)" fill="#c8d8e8" stroke="#222"><rect x="-12" y="-1" width="6" height="12"/><rect x="-12" y="-11" width="6" height="8"/><rect x="-4" y="-11" width="6" height="22"/><rect x="4" y="-11" width="7" height="22"/></g>

<!-- fill stroke tab icons -->
<rect x="1506" y="579" width="15" height="15" fill="url(#gb)" opacity=".9"/>
<rect x="1577.500" y="579.500" width="15" height="15" stroke="#aaa"/>
<path d="M1708 583h14M1708 588h14M1708 594h14" stroke="#555" stroke-width="1.400"/><path d="M1716 580l5 3-5 3" stroke="#555"/>

<!-- arrows -->
<use href="#arr" x="1708" y="630"/>
<use href="#arl" x="1687" y="668"/>
<use href="#arr" x="1612" y="706"/><use href="#arr" x="1689" y="706"/><use href="#arr" x="1766" y="706"/>
<use href="#arr" x="1843" y="909"/>
<path d="M1905 968v11l-5-5.500z" fill="#999"/>
<use href="#arr" x="358" y="1010"/>
<circle cx="1470" cy="947" r="7" fill="#f8f0f0" stroke="#ddd"/>

<!-- join cap glyphs -->
<g opacity=".45">
<path d="M1567 754V742C1567 736 1572 734 1578 734H1591V746H1580V756H1567z" fill="#d6dfe8" stroke="#aab"/>
<path d="M1615 754V743L1624 734H1639V746H1628V756H1615z" fill="#d6dfe8" stroke="#aab"/>
<path d="M1663 756V734H1687V746H1676V756z" fill="#bcc8d4" stroke="#99a"/>
<rect x="1570" y="780" width="18" height="14" fill="#c8d2dc" stroke="#99a"/>
<path d="M1618 795V778C1618 770 1636 770 1636 778V795z" fill="#d6dfe8" stroke="#aab"/>
<rect x="1666" y="772" width="18" height="23" fill="#d6dfe8" stroke="#aab"/>
</g>
<use href="#ord" x="1578" y="821"/><use href="#ord" x="1626" y="821"/><use href="#ord2" x="1674" y="821"/>
<use href="#ord2" x="1578" y="859"/>
<g transform="translate(1626,859)"><circle cx="-4" cy="-4" r="7.500" fill="#c9d8e8" stroke="#111" stroke-width="1.300"/><rect x="-2" y="-3" width="13" height="12" fill="#3d6ea5"/></g>
<use href="#ord2" x="1674" y="859"/>

<!-- palette none X -->
<path d="M1 957L18 976M18 957L1 976" stroke="#5a1010" stroke-width="1.500"/>

<!-- status icons -->
<g transform="translate(233,1008)"><path d="M-8 0C-4-6 4-6 8 0 4 6-4 6-8 0z" fill="#fff" stroke="#222" stroke-width="1.300"/><circle r="3.500" fill="#222"/><path d="M-6-5l-2-2M0-7V-9M6-5l2-2" stroke="#222"/></g>
<g transform="translate(269,1009)"><path d="M-3-3V-6C-3-10 3-10 4-6" stroke="#333" stroke-width="1.300"/><rect x="-5" y="-3" width="10" height="10" fill="#eed75a" stroke="#333"/><rect x="-1" y="0" width="2" height="4" fill="#333"/></g>
</svg>
</body></html>
